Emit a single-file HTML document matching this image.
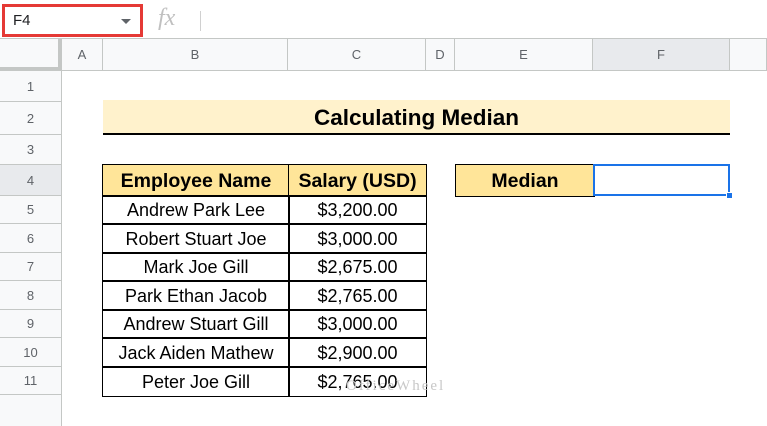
<!DOCTYPE html><html><head><style>
*{margin:0;padding:0;box-sizing:border-box}
body{width:767px;height:426px;background:#fff;position:relative;overflow:hidden;font-family:"Liberation Sans",Arial,sans-serif}
.a{position:absolute}
.ch{position:absolute;top:39px;height:32px;background:#f8f9fa;border-right:1px solid #c4c7c5;border-bottom:1px solid #c4c7c5;color:#5f6368;font-size:13px;display:flex;align-items:center;justify-content:center}
.rh{position:absolute;left:0;width:62px;background:#f8f9fa;border-right:1px solid #c4c7c5;border-bottom:1px solid #c4c7c5;color:#5f6368;font-size:13px;display:flex;align-items:center;justify-content:center}
.c{position:absolute;display:flex;align-items:center;justify-content:center;font-size:18px;color:#000;border:1.5px solid #000;padding-top:1px}
.h{background:#ffe599;font-weight:bold;font-size:19.5px}
</style></head><body>
<div class="a" style="left:0;top:0;width:767px;height:39px;border-bottom:1px solid #c4c7c5"></div>
<div class="a" style="left:2px;top:4px;width:141px;height:33px;border:3px solid #e53935;font-size:15px;padding:5px 0 0 8px;color:#202124">F4</div>
<div class="a" style="left:121px;top:19px;width:0;height:0;border-left:5px solid transparent;border-right:5px solid transparent;border-top:5px solid #5f6368"></div>
<div class="a" style="left:158px;top:5px;font-family:'Liberation Serif',serif;font-style:italic;font-size:24px;color:#c0c0c0">fx</div>
<div class="a" style="left:200px;top:11px;width:1px;height:20px;background:#d0d0d0"></div>
<div class="ch" style="left:0;width:62px;border-right:4px solid #c4c7c5;border-bottom:4px solid #c4c7c5"></div>
<div class="ch" style="left:62px;width:41px">A</div>
<div class="ch" style="left:103px;width:185px">B</div>
<div class="ch" style="left:288px;width:138px">C</div>
<div class="ch" style="left:426px;width:29px">D</div>
<div class="ch" style="left:455px;width:138px">E</div>
<div class="ch" style="left:593px;width:137px;background:#e8eaed">F</div>
<div class="ch" style="left:730px;width:37px"></div>
<div class="rh" style="top:71px;height:31px">1</div>
<div class="rh" style="top:102px;height:33px">2</div>
<div class="rh" style="top:135px;height:30px">3</div>
<div class="rh" style="top:165px;height:31px;background:#e8eaed">4</div>
<div class="rh" style="top:196px;height:28px">5</div>
<div class="rh" style="top:224px;height:29px">6</div>
<div class="rh" style="top:253px;height:28px">7</div>
<div class="rh" style="top:281px;height:29px">8</div>
<div class="rh" style="top:310px;height:28px">9</div>
<div class="rh" style="top:338px;height:29px">10</div>
<div class="rh" style="top:367px;height:28px">11</div>
<div class="rh" style="top:395px;height:31px;border-bottom:none"></div>
<div class="a" style="left:103px;top:100px;width:627px;height:35px;background:#fff2cc;border-bottom:2px solid #000;display:flex;align-items:center;justify-content:center;font-weight:bold;font-size:22.5px;padding-top:2px">Calculating Median</div>
<div class="c h" style="left:102px;top:164px;width:188px;height:33px">Employee Name</div>
<div class="c h" style="left:288px;top:164px;width:139px;height:33px">Salary (USD)</div>
<div class="c" style="left:102px;top:195px;width:188px;height:30px">Andrew Park Lee</div><div class="c" style="left:288px;top:195px;width:139px;height:30px">$3,200.00</div>
<div class="c" style="left:102px;top:223px;width:188px;height:31px">Robert Stuart Joe</div><div class="c" style="left:288px;top:223px;width:139px;height:31px">$3,000.00</div>
<div class="c" style="left:102px;top:252px;width:188px;height:30px">Mark Joe Gill</div><div class="c" style="left:288px;top:252px;width:139px;height:30px">$2,675.00</div>
<div class="c" style="left:102px;top:280px;width:188px;height:31px">Park Ethan Jacob</div><div class="c" style="left:288px;top:280px;width:139px;height:31px">$2,765.00</div>
<div class="c" style="left:102px;top:309px;width:188px;height:30px">Andrew Stuart Gill</div><div class="c" style="left:288px;top:309px;width:139px;height:30px">$3,000.00</div>
<div class="c" style="left:102px;top:337px;width:188px;height:31px">Jack Aiden Mathew</div><div class="c" style="left:288px;top:337px;width:139px;height:31px">$2,900.00</div>
<div class="c" style="left:102px;top:366px;width:188px;height:31px">Peter Joe Gill</div><div class="c" style="left:288px;top:366px;width:139px;height:31px">$2,765.00</div>
<div class="c h" style="left:455px;top:164px;width:140px;height:33px">Median</div>
<div class="a" style="left:593px;top:164px;width:137px;height:32px;border:2px solid #1a73e8"></div>
<div class="a" style="left:726px;top:192px;width:7px;height:7px;background:#1a73e8;border:1px solid #fff"></div>
<div class="a" style="left:346px;top:378px;font-family:'Liberation Serif',serif;font-size:15px;letter-spacing:2px;color:#c8c8c8">OfficeWheel</div>
</body></html>
